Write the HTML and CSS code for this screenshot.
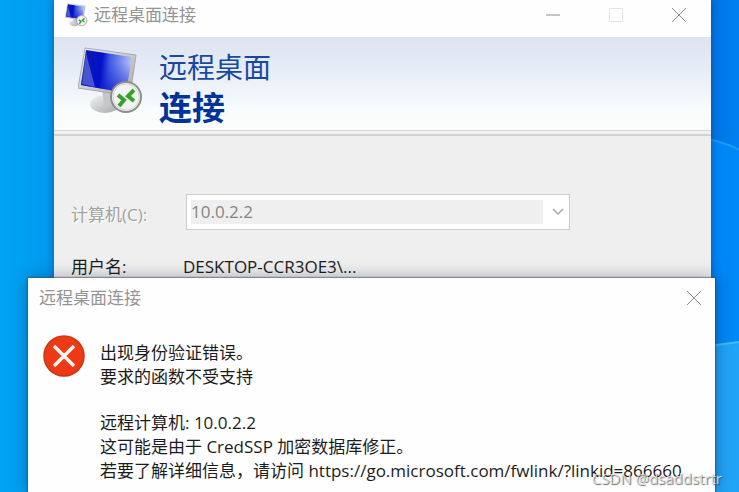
FILE: index.html
```html
<!DOCTYPE html>
<html lang="zh-CN">
    <head>
    <meta charset="utf-8">
    <title>远程桌面连接</title>
    <meta name="viewport" content="width=device-width, initial-scale=1">
    <link rel="stylesheet" href="styles.css">
    </head>
    <body>
        <svg width="0" height="0" class="defs" aria-hidden="true">
            <defs>
                <linearGradient id="screen" x1="0" y1="0.3" x2="1" y2="0.4">
                    <stop offset="0" stop-color="#0c1cb0"/>
                    <stop offset="0.4" stop-color="#0410c8"/>
                    <stop offset="0.55" stop-color="#4058e4"/>
                    <stop offset="1" stop-color="#b8c8fa"/>
                </linearGradient>
                <linearGradient id="shade" x1="0" y1="0" x2="0" y2="1">
                    <stop offset="0.3" stop-color="#0410c8" stop-opacity="0"/>
                    <stop offset="1" stop-color="#0410c8" stop-opacity="0.7"/>
                </linearGradient>
                <linearGradient id="metal" x1="0" y1="0" x2="1" y2="1">
                    <stop offset="0" stop-color="#f4f4f4"/>
                    <stop offset="1" stop-color="#a4a6a8"/>
                </linearGradient>
                <symbol id="rdp" viewBox="0 0 66 68">
                    <ellipse cx="27" cy="57" rx="15" ry="9" fill="url(#metal)"/>
                    <path d="M24 42l14 4-2 12H26z" fill="#c4c6c8"/>
                    <path d="M7 1L58 8 52 49 0 41z" fill="url(#metal)" stroke="#a8aaac"/>
                    <path d="M8 3L54 10 48 46 3 38z" fill="url(#screen)"/>
                    <path d="M8 3L54 10 48 46 3 38z" fill="url(#shade)"/>
                    <path d="M8 6L17 40 4 37z" fill="#6070d8" opacity="0.7"/>
                    <circle cx="48" cy="50" r="15" fill="#f2f3f2" stroke="#8c8e8e" stroke-width="2"/>
                    <circle cx="48" cy="50" r="13" fill="none" stroke="#d4d6d4"/>
                    <path d="M40 48l6 5-5 6M56 43l-6 6 6 5" fill="none" stroke="#38a030" stroke-width="4"/>
                </symbol>
            </defs>
        </svg>

        <main class="desktop">
            <svg class="wallpaper" viewBox="0 0 739 492" preserveAspectRatio="none" aria-hidden="true">
                <path d="M700 138Q724 141 739 150V342L700 347z" fill="#0090ff" opacity="0.6"/>
                <path d="M700 347L739 342V492H700z" fill="#20a4f8"/>
                <path d="M700 138Q724 141 739 150" fill="none" stroke="#1c9cf4" stroke-width="2"/>
                <path d="M700 347L739 342" fill="none" stroke="#40bcfa" stroke-width="2"/>
            </svg>

            <section class="window">
                <header class="titlebar">
                    <svg class="titleIcon"><use href="#rdp"/></svg>
                    <span class="title">远程桌面连接</span>
                    <button class="winBtn" aria-label="最小化"><svg viewBox="0 0 14 14"><path d="M0 7h14"/></svg></button>
                    <button class="winBtn off" aria-label="最大化" disabled><svg viewBox="0 0 14 14"><path d="M.5 .5h13v13H.5z"/></svg></button>
                    <button class="winBtn" aria-label="关闭"><svg viewBox="0 0 14 14"><path d="M0 0l14 14M14 0L0 14"/></svg></button>
                </header>
                <div class="banner">
                    <svg class="bannerIcon"><use href="#rdp"/></svg>
                    <h1 class="bannerText">远程桌面<strong>连接</strong></h1>
                </div>
                <form class="form">
                    <label class="off" for="computer">计算机(C):</label>
                    <div class="combo">
                        <select id="computer" disabled>
                            <option>10.0.2.2</option>
                        </select>
                        <svg viewBox="0 0 12 12"><path d="M1 3l5 5 5-5"/></svg>
                    </div>
                    <span>用户名:</span>
                    <span class="user">DESKTOP-CCR3OE3\...</span>
                </form>
            </section>

            <section class="dialog" role="alertdialog" aria-labelledby="dialogTitle">
                <header class="titlebar">
                    <span class="title" id="dialogTitle">远程桌面连接</span>
                    <button class="winBtn" aria-label="关闭"><svg viewBox="0 0 14 14"><path d="M0 0l14 14M14 0L0 14"/></svg></button>
                </header>
                <div class="message">
                    <svg class="errorIcon" viewBox="0 0 42 42">
                        <circle cx="21" cy="21" r="20" fill="#ee3a14" stroke="#c83818" stroke-width="1.5"/>
                        <path d="M11 11l20 20M31 11L11 31" stroke="#fff4ee" stroke-width="3.5"/>
                    </svg>
                    <div class="lines">
                        <p>出现身份验证错误。<br>要求的函数不受支持</p>
                        <p>远程计算机: 10.0.2.2<br>这可能是由于 CredSSP 加密数据库修正。<br>若要了解详细信息，请访问 https://go.microsoft.com/fwlink/?linkid=866660</p>
                    </div>
                </div>
            </section>

            <span class="watermark">CSDN @dsaddstrtr</span>
        </main>
    </body>
</html>
```
FILE: styles.css
```css
        body
        {
            margin: 0;
            font-family: "Open Sans", "Noto Sans CJK SC", sans-serif;
            font-size: 17px;
            line-height: 24px;
            color: #1c1c1c;
        }
        .defs
        {
            position: absolute;
        }
        .desktop
        {
            position: relative;
            height: 100vh;
            overflow: hidden;
            background: linear-gradient(90deg, #00a4f4, #0098f0 8%, #0074e4 96%, #0080f0);
        }
        .wallpaper
        {
            position: absolute;
            width: 100%;
            height: 100%;
        }

        /* windows */
        .window, .dialog
        {
            position: absolute;
            bottom: 0;
        }
        .window
        {
            top: 0;
            left: 54px;
            right: 28px;
            background: #efefef;
            box-shadow: 0 0 8px rgba(0,40,90,0.5);
        }
        .dialog
        {
            top: 278px;
            left: 28px;
            right: 24px;
            background: #fefefe;
            box-shadow: 0 0 1px 1px rgba(60,70,80,0.5), 0 0 16px rgba(0,20,50,0.35);
        }
        .titlebar
        {
            display: flex;
            align-items: center;
            height: 37px;
            box-sizing: border-box;
            padding: 0 25px 7px 11px;
            background: #fefefe;
            color: #949494;
        }
        .dialog .titlebar
        {
            height: 42px;
            padding: 0 14px 2px 11px;
        }
        .titleIcon
        {
            width: 23px;
            height: 24px;
            margin-right: 6px;
        }
        .title
        {
            flex: 1;
        }
        .winBtn
        {
            padding: 0;
            border: none;
            background: none;
            color: #8c8c8c;
            margin-left: 49px;
            height: 14px;
        }
        .winBtn svg
        {
            display: block;
            width: 14px;
            height: 14px;
            overflow: visible;
            fill: none;
            stroke: currentColor;
        }
        .winBtn.off
        {
            color: #e8e2e0;
        }

        /* banner */
        .banner
        {
            display: flex;
            height: 94px;
            padding: 10px 24px 0;
            box-sizing: border-box;
            background: linear-gradient(#dce4f0, #e8eef8 40%, #fafcfc 80%, #fbfdfc);
            border-bottom: 1px solid #d4d6d6;
        }
        .bannerIcon
        {
            width: 66px;
            height: 68px;
        }
        .bannerText
        {
            margin: 0 0 0 15px;
            font-size: 28px;
            line-height: 40px;
            font-weight: 400;
            color: #1848a0;
        }
        .bannerText strong
        {
            display: block;
            font-size: 33px;
            line-height: 42px;
            font-weight: 700;
            color: #003399;
        }

        /* form */
        .form
        {
            display: grid;
            grid-template-columns: 112px 387px;
            row-gap: 25px;
            align-items: center;
            padding: 60px 17px 0;
            border-top: 3px solid #f0f2f2;
            box-shadow: inset 0 2px 0 #d0d2d2;
        }
        .form .off
        {
            color: #a0a0a0;
            padding-top: 6px;
            text-shadow: 1px 1px 0 #fff;
        }
        .combo
        {
            display: flex;
            align-items: center;
            box-sizing: border-box;
            height: 36px;
            margin-left: 3px;
            padding: 0 5px 0 4px;
            border: 1px solid #cccccc;
            background: #fff;
        }
        .combo select
        {
            flex: 1;
            appearance: none;
            height: 24px;
            padding: 0;
            border: none;
            border-radius: 0;
            background: #efefef;
            color: #848484;
            font: inherit;
            line-height: 24px;
            opacity: 1;
        }
        .combo svg
        {
            width: 12px;
            height: 12px;
            margin-left: 9px;
            fill: none;
            stroke: #a8a8a8;
            stroke-width: 1.5;
        }

        /* error message */
        .message
        {
            display: flex;
            gap: 15px;
            padding: 15px 15px 0;
        }
        .errorIcon
        {
            width: 42px;
            height: 42px;
            flex: none;
        }
        .lines
        {
            padding-top: 6px;
            white-space: nowrap;
        }
        .lines p
        {
            margin: 0 0 22px;
        }

        .watermark
        {
            position: absolute;
            right: 17px;
            bottom: 2px;
            font-size: 15px;
            color: rgba(225,225,225,0.9);
            text-shadow: 1px 1px 1px rgba(70,70,70,0.8);
        }
```
